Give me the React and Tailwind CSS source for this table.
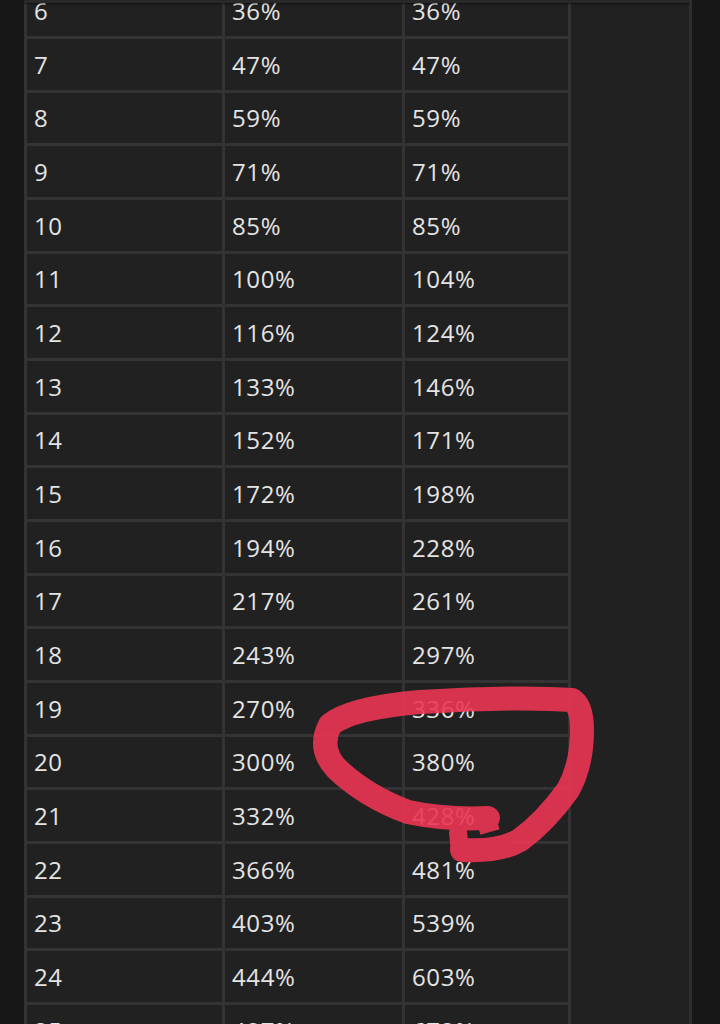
const rows = [
  [6, "36%", "36%"],
  [7, "47%", "47%"],
  [8, "59%", "59%"],
  [9, "71%", "71%"],
  [10, "85%", "85%"],
  [11, "100%", "104%"],
  [12, "116%", "124%"],
  [13, "133%", "146%"],
  [14, "152%", "171%"],
  [15, "172%", "198%"],
  [16, "194%", "228%"],
  [17, "217%", "261%"],
  [18, "243%", "297%"],
  [19, "270%", "336%"],
  [20, "300%", "380%"],
  [21, "332%", "428%"],
  [22, "366%", "481%"],
  [23, "403%", "539%"],
  [24, "444%", "603%"],
  [25, "487%", "672%"],
]

function Cell({ children }) {
  return (
    <div className="bg-[#212121] h-[50.67px] flex items-center pl-[7px] pt-[1px] text-[24px] tracking-[0.6px] text-[#e4e4e4]">
      {children}
    </div>
  )
}

export default function App() {
  return (
    <div className="relative w-[720px] h-[1024px] overflow-hidden bg-[#171717] flex" style={{ fontFamily: '"Open Sans", "Noto Sans", sans-serif' }}>
      <div className="w-[24px] shrink-0" />
      <div className="relative w-[668px] shrink-0 bg-[#212121] border-r-[3px] border-[#2e2e2e]">
        {/* top edge of the sticky header */}
        <div className="absolute top-0 left-0 right-0 h-[3px] bg-[#292929] shadow-[0_1px_2px_rgba(0,0,0,0.5)] z-10" />

        <div className="-mt-[17.67px] w-[547px] grid grid-cols-[195px_177px_163px] gap-[3px] p-[3px] bg-[#333333]">
          {rows.map(([lvl, a, b]) => (
            <div key={lvl} className="contents">
              <Cell>{lvl}</Cell>
              <Cell>{a}</Cell>
              <Cell>{b}</Cell>
            </div>
          ))}
        </div>
      </div>

      {/* hand-drawn red scribble */}
      <svg className="absolute inset-0 pointer-events-none" width="720" height="1024" viewBox="0 0 720 1024">
        <g fill="none" stroke="#ec3553" strokeLinecap="round" strokeLinejoin="round" opacity="0.9">
          <path
            d="M488 818 Q445 820 408 812 Q365 796 336 768 Q318 748 330 725 Q350 708 420 702 Q520 696 572 700 Q582 706 582 730 Q582 765 568 790 Q545 822 520 840 Q500 852 462 850"
            strokeWidth="24"
          />
          <path d="M458 832 L460 852" strokeWidth="18" />
          <path d="M484 812 L490 832" strokeWidth="20" strokeLinecap="butt" />
        </g>
      </svg>
    </div>
  )
}
